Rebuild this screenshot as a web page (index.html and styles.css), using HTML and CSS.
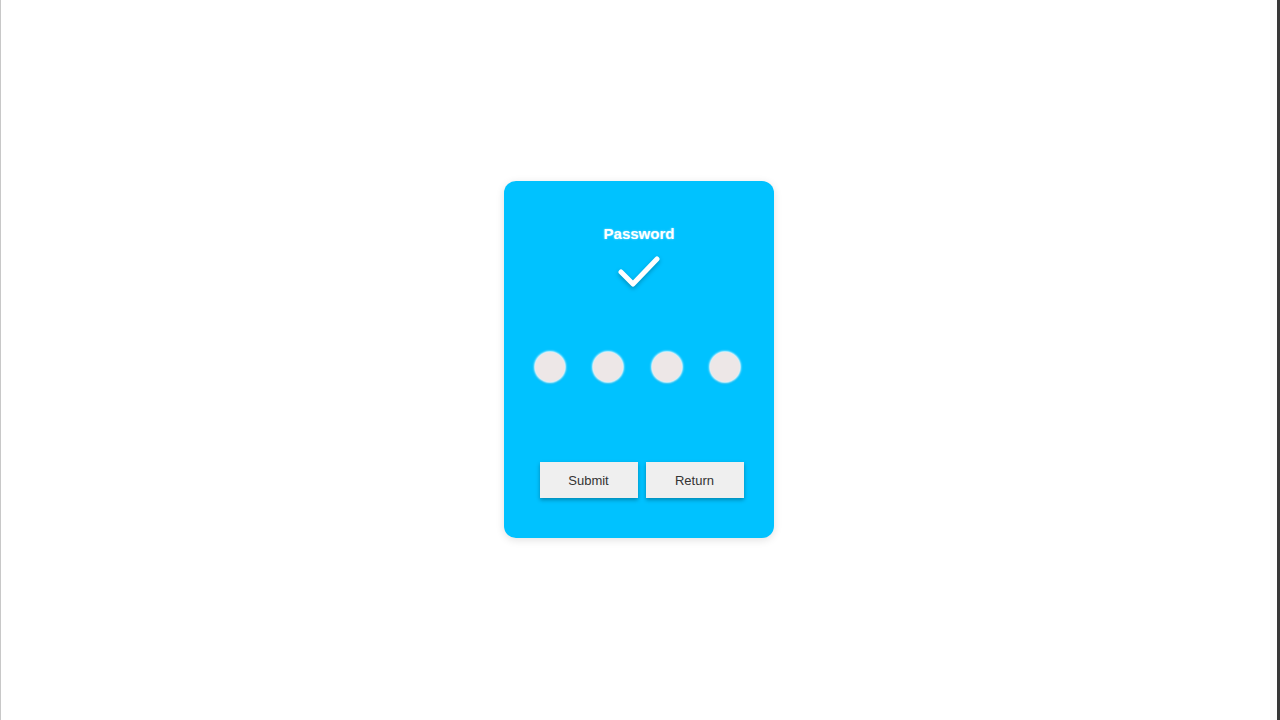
FILE: index.html
```html
<!DOCTYPE html>
<html>
<head>
<meta charset="utf-8">
<link rel="stylesheet" href="styles.css">
</head>
<body>
<div class="page">
  <div class="card">
    <div class="title">Password</div>
    <svg class="check" width="44" height="34" viewBox="0 0 44 34">
      <path d="M4 17 L16 29 L40 4" fill="none" stroke="#ffffff" stroke-width="5" stroke-linecap="round" stroke-linejoin="round"/>
    </svg>
    <div class="dots">
      <span class="dot"></span>
      <span class="dot"></span>
      <span class="dot"></span>
      <span class="dot"></span>
    </div>
    <div class="buttons">
      <button class="btn">Submit</button>
      <button class="btn">Return</button>
    </div>
  </div>
</div>
</body>
</html>
```
FILE: styles.css
```css
html, body {
  margin: 0;
  padding: 0;
  background: #ffffff;
}
.page {
  box-sizing: border-box;
  width: 1280px;
  height: 720px;
  border-left: 1px solid #c8c8c8;
  border-right: 3px solid #3a3a3a;
  display: flex;
  justify-content: center;
  align-items: flex-start;
  padding-top: 181px;
  font-family: "Liberation Sans", Arial, sans-serif;
}
.card {
  width: 270px;
  height: 357px;
  box-sizing: border-box;
  background: #00c2ff;
  border-radius: 12px;
  box-shadow: 0 2px 8px rgba(0, 0, 0, 0.12);
  display: flex;
  flex-direction: column;
  align-items: center;
  padding-top: 45px;
}
.title {
  color: #ffffff;
  font-size: 15px;
  font-weight: bold;
  line-height: 16px;
  text-shadow: 0 0 2px rgba(255,255,255,0.6);
}
.check {
  margin-top: 13px;
  filter: drop-shadow(0 2px 2px rgba(0,0,0,0.25));
}
.dots {
  margin-top: 63px;
  display: flex;
  gap: 28.5px;
  margin-left: -3px;
}
.dot {
  width: 30px;
  height: 30px;
  border-radius: 50%;
  background: #ede7e7;
  box-shadow: 0 0 2px 1px rgba(255,255,255,0.95), 0 2px 3px rgba(0,0,0,0.08);
}
.buttons {
  margin-top: 80px;
  display: flex;
  gap: 8px;
  margin-left: 5px;
}
.btn {
  width: 98px;
  height: 36px;
  border: none;
  background: #efefef;
  color: #333333;
  font-family: "Liberation Sans", Arial, sans-serif;
  font-size: 13px;
  box-shadow: 0 2px 4px rgba(0,0,0,0.3);
  padding: 0;
}
```
